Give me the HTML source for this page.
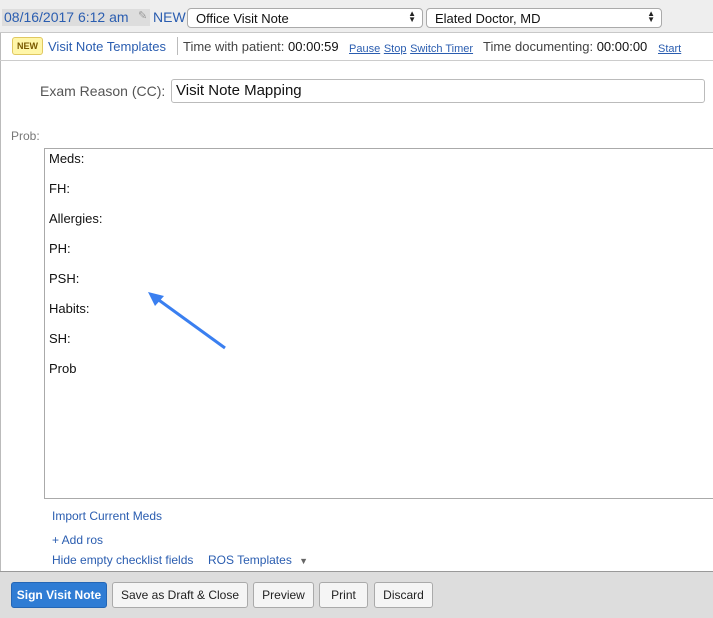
<!DOCTYPE html>
<html><head><style>
*{box-sizing:border-box;margin:0;padding:0}
body{width:713px;height:618px;overflow:hidden;background:#fff;font-family:"Liberation Sans",Arial,sans-serif;font-size:13px;color:#222;position:relative}
.abs{position:absolute}
a,.lnk{color:#2a5db0;text-decoration:none}
.top{left:0;top:0;width:713px;height:33px;background:#eee;border-bottom:1px solid #c8c8c8}
.sel{position:absolute;top:8px;height:20px;border:1px solid #aaa;border-radius:4px;background:#fff;font-size:13px;padding:2px 8px;color:#111}
.arr{position:absolute;right:6px;top:2px;font-size:8px;line-height:6px;color:#222}
.u{text-decoration:underline;font-size:11px}
.btn{position:absolute;top:582px;height:26px;border:1px solid #aaa;border-radius:3px;background:#f5f5f5;font-size:12px;text-align:center;line-height:24px;color:#222}
</style></head><body>
<div class="abs" style="left:0;top:0;width:1px;height:618px;background:#bbb"></div>
<div class="abs top"></div>
<div class="abs" style="left:2px;top:9px;width:148px;height:17px;background:#ddd"></div>
<div class="abs lnk" style="left:4px;top:9px;font-size:14px">08/16/2017 6:12 am</div>
<div class="abs" style="left:138px;top:9px;font-size:11px;color:#999">✎</div>
<div class="abs lnk" style="left:153px;top:9px;font-size:14px">NEW</div>
<div class="sel" style="left:187px;width:236px">Office Visit Note<span class="arr">▲<br>▼</span></div>
<div class="sel" style="left:426px;width:236px">Elated Doctor, MD<span class="arr">▲<br>▼</span></div>

<div class="abs" style="left:12px;top:37px;width:31px;height:18px;background:#fff6a8;border:1px solid #e0c860;border-radius:3px;font-size:9px;font-weight:bold;color:#7a5a00;text-align:center;line-height:16px">NEW</div>
<div class="abs lnk" style="left:48px;top:39px">Visit Note Templates</div>
<div class="abs" style="left:177px;top:37px;width:1px;height:18px;background:#bbb"></div>
<div class="abs" style="left:183px;top:39px;color:#444">Time with patient: <span style="color:#111">00:00:59</span></div>
<div class="abs" style="left:349px;top:40px"><a class="u">Pause</a> <a class="u">Stop</a> <a class="u">Switch Timer</a></div>
<div class="abs" style="left:483px;top:39px;color:#444">Time documenting: <span style="color:#111">00:00:00</span></div>
<div class="abs" style="left:658px;top:40px"><a class="u">Start</a></div>
<div class="abs" style="left:0;top:60px;width:713px;height:1px;background:#ccc"></div>

<div class="abs" style="left:40px;top:83px;font-size:14px;color:#555">Exam Reason (CC):</div>
<div class="abs" style="left:171px;top:79px;width:534px;height:24px;border:1px solid #bbb;border-radius:3px;font-size:15px;padding:2px 4px;color:#111">Visit Note Mapping</div>

<div class="abs" style="left:11px;top:129px;font-size:12px;color:#777">Prob:</div>
<div class="abs" style="left:44px;top:148px;width:680px;height:351px;border:1px solid #aaa;font-size:13px;color:#111">
<div style="position:absolute;left:4px;top:-5px;line-height:30px">Meds:<br>FH:<br>Allergies:<br>PH:<br>PSH:<br>Habits:<br>SH:<br>Prob</div>
</div>
<svg class="abs" style="left:0;top:0" width="713" height="618"><line x1="225" y1="348" x2="156" y2="298" stroke="#3a7ff0" stroke-width="3"/><polygon points="148,292 164,296 155,306" fill="#3a7ff0"/></svg>

<div class="abs lnk" style="left:52px;top:509px;font-size:12px">Import Current Meds</div>
<div class="abs lnk" style="left:52px;top:533px;font-size:12px">+ Add ros</div>
<div class="abs lnk" style="left:52px;top:553px;font-size:12px">Hide empty checklist fields</div>
<div class="abs lnk" style="left:208px;top:553px;font-size:12px">ROS Templates <span style="color:#666;font-size:9px;margin-left:4px">▼</span></div>

<div class="abs" style="left:0;top:571px;width:713px;height:47px;background:#ddd;border-top:1px solid #999"></div>
<div class="btn" style="left:11px;width:96px;background:#2f7cd4;border-color:#2466b5;color:#fff;font-weight:bold">Sign Visit Note</div>
<div class="btn" style="left:112px;width:136px">Save as Draft &amp; Close</div>
<div class="btn" style="left:253px;width:61px">Preview</div>
<div class="btn" style="left:319px;width:49px">Print</div>
<div class="btn" style="left:374px;width:59px">Discard</div>
</body></html>
